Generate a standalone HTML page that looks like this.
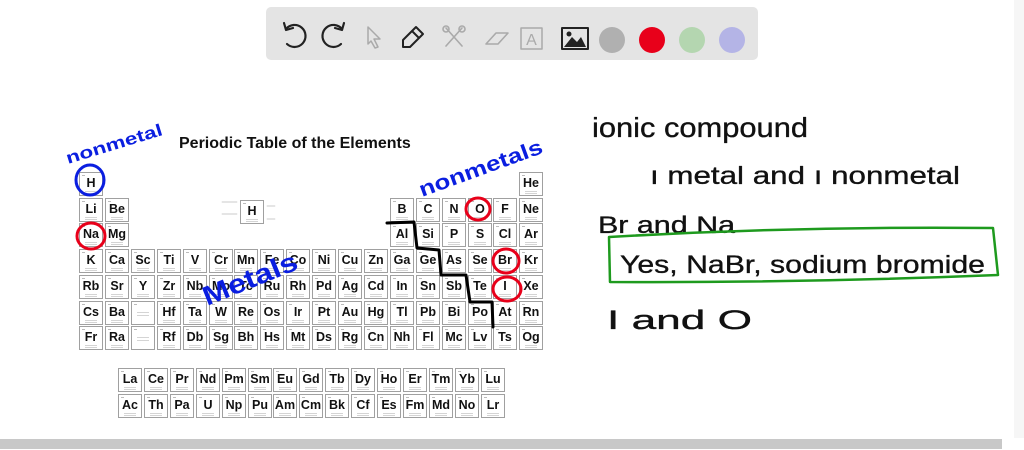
<!DOCTYPE html>
<html><head><meta charset="utf-8"><style>
html,body{margin:0;padding:0;width:1024px;height:450px;overflow:hidden;background:#fff;font-family:"Liberation Sans",sans-serif;position:relative}
.c{position:absolute;width:24px;height:24px;border:1px solid #a0a0a0;box-sizing:border-box;background:#fff}
.c b{position:absolute;left:0;right:0;top:4px;text-align:center;font-size:12.5px;font-weight:bold;color:#111;line-height:13px}
.c i{position:absolute;left:5px;right:5px;height:1px;background:#d4d4d4}
.c s{position:absolute;left:2px;top:2px;width:3px;height:1px;background:#bbb}
#tb{position:absolute;left:266px;top:7px;width:492px;height:53px;background:#e4e4e4;border-radius:5px}
.dot{position:absolute;top:20px;width:26px;height:26px;border-radius:50%}
</style></head><body>
<div id="tb">
<svg width="492" height="53" style="position:absolute;left:0;top:0" fill="none" stroke-linecap="round" stroke-linejoin="round">
<g stroke="#222" stroke-width="2.2">
<path d="M20 22 A11 11 0 1 1 21 37"/><path d="M18 16 L20 23 L27 21"/>
<path d="M76 22 A11 11 0 1 0 75 37"/><path d="M78 16 L76 23 L69 21"/>
</g>
<path d="M102 20 L114 32 L108 32 L112 40 L109 41 L105 34 L102 37 Z" stroke="#aaa" stroke-width="1.5"/>
<path d="M137 40 L137 33 L150 20 L157 27 L144 40 Z M146 24 L153 31" stroke="#222" stroke-width="2"/>
<g stroke="#aaa" stroke-width="1.6"><path d="M180 21 L196 39 M196 21 L180 39"/><circle cx="180" cy="22" r="3"/><circle cx="196" cy="22" r="3"/></g>
<path d="M220 37 L230 26 L242 26 L232 37 Z M220 37 L232 37" stroke="#aaa" stroke-width="1.6"/>
<rect x="255" y="21" width="21" height="21" stroke="#aaa" stroke-width="1.5"/>
<text x="265.5" y="38" text-anchor="middle" font-size="16" fill="#aaa" font-family="Liberation Sans">A</text>
<rect x="296" y="21" width="26" height="21" stroke="#222" stroke-width="2"/>
<path d="M298 40 L306 30 L311 35 L315 30 L320 40 Z" fill="#222"/><circle cx="303" cy="27" r="2.5" fill="#222"/>
</svg>
<div class="dot" style="left:333px;background:#b0b0b0"></div>
<div class="dot" style="left:373px;background:#e8001a"></div>
<div class="dot" style="left:413px;background:#b4d6b0"></div>
<div class="dot" style="left:453px;background:#b4b4e6"></div>
</div>
<div style="position:absolute;left:179px;top:135px;font-size:16px;font-weight:bold;color:#111">Periodic Table of the Elements</div>
<div id="pt"></div>
<svg width="1024" height="450" style="position:absolute;left:0;top:0" fill="none" stroke-linecap="round" stroke-linejoin="round">
<g stroke="#bbb" stroke-width="0.7"><path d="M222 202 L237 202 M222 214 L237 214 M267 206 L275 206 M267 219 L275 219"/></g>
<g stroke="#0a1ee0" stroke-width="3">
<ellipse cx="90" cy="180" rx="14" ry="15"/>
</g>
<g stroke="#e8001a" stroke-width="3">
<ellipse cx="91" cy="236" rx="14" ry="13"/>
<ellipse cx="478" cy="209" rx="12" ry="11"/>
<ellipse cx="506" cy="261" rx="13" ry="12"/>
<ellipse cx="507" cy="289" rx="14" ry="12"/>
</g>
<path d="M387 223 L414 222 L417 248 L439 250 L441 275 L466 275 L470 302 L492 302 L493 327" stroke="#000" stroke-width="3"/>
<g font-family="Liberation Sans" fill="#0a1ee0" font-weight="bold">
<text x="68" y="164" font-size="17" transform="rotate(-17 68 164)" textLength="100" lengthAdjust="spacingAndGlyphs">nonmetal</text>
<text x="422" y="197" font-size="21" transform="rotate(-20 422 197)" textLength="130" lengthAdjust="spacingAndGlyphs">nonmetals</text>
<text x="207" y="306" font-size="27" transform="rotate(-22 207 306)" textLength="100" lengthAdjust="spacingAndGlyphs">Metals</text>
</g>
<g font-family="Liberation Sans" fill="#111" stroke="#111" stroke-width="0.35">
<text x="592" y="137" font-size="28" textLength="216" lengthAdjust="spacingAndGlyphs">ionic compound</text>
<text x="650" y="184" font-size="25" textLength="310" lengthAdjust="spacingAndGlyphs">ı metal and ı nonmetal</text>
<text x="598" y="233" font-size="24" textLength="137" lengthAdjust="spacingAndGlyphs">Br and Na</text>
<text x="620" y="273" font-size="25" textLength="365" lengthAdjust="spacingAndGlyphs">Yes,  NaBr, sodium bromide</text>
<text x="607" y="329" font-size="27" textLength="145" lengthAdjust="spacingAndGlyphs">I and O</text>
</g>
<path d="M609 237 Q800 226 993 228 L998 275 Q800 283 610 282 Z" stroke="#1e9a1e" stroke-width="2.5"/>
</svg>
<div style="position:absolute;left:0;top:439px;width:1002px;height:10px;background:#c8c8c8"></div>
<div style="position:absolute;left:1014px;top:0;width:10px;height:438px;background:#f6f6f6"></div>
<script>
var rows=[["H",1,1],["He",1,18],["Li",2,1],["Be",2,2],["B",2,13],["C",2,14],["N",2,15],["O",2,16],["F",2,17],["Ne",2,18],["Na",3,1],["Mg",3,2],["Al",3,13],["Si",3,14],["P",3,15],["S",3,16],["Cl",3,17],["Ar",3,18]];
var p4="K Ca Sc Ti V Cr Mn Fe Co Ni Cu Zn Ga Ge As Se Br Kr".split(" "),
p5="Rb Sr Y Zr Nb Mo Tc Ru Rh Pd Ag Cd In Sn Sb Te I Xe".split(" "),
p6="Cs Ba · Hf Ta W Re Os Ir Pt Au Hg Tl Pb Bi Po At Rn".split(" "),
p7="Fr Ra · Rf Db Sg Bh Hs Mt Ds Rg Cn Nh Fl Mc Lv Ts Og".split(" ");
[p4,p5,p6,p7].forEach(function(a,k){a.forEach(function(s,j){rows.push([s,4+k,j+1])})});
var ry=[0,172,198,223,249,275,301,326],h="";
function cell(s,x,y){h+='<div class="c" style="left:'+x+'px;top:'+y+'px"><s></s>'+(s=="·"?'<i style="top:10px"></i><i style="top:13px"></i>':'<b>'+s+'</b><i style="top:18px"></i><i style="top:20px"></i>')+'</div>';}
rows.forEach(function(r){cell(r[0],Math.round(79+(r[2]-1)*25.9),ry[r[1]])});
"La Ce Pr Nd Pm Sm Eu Gd Tb Dy Ho Er Tm Yb Lu".split(" ").forEach(function(s,j){cell(s,Math.round(118+j*25.9),368)});
"Ac Th Pa U Np Pu Am Cm Bk Cf Es Fm Md No Lr".split(" ").forEach(function(s,j){cell(s,Math.round(118+j*25.9),394)});
cell("H",240,200);
document.getElementById("pt").innerHTML=h;
</script>
</body></html>
